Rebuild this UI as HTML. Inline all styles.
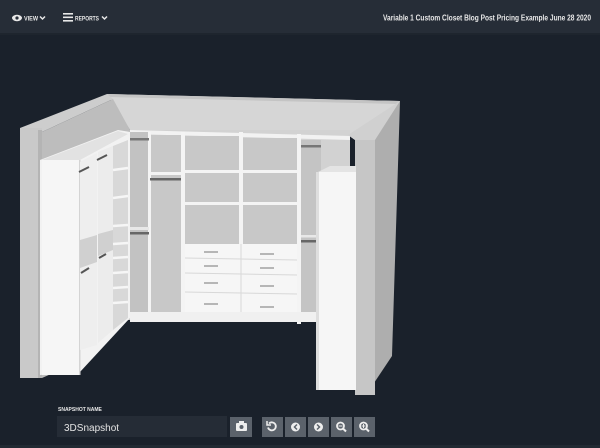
<!DOCTYPE html>
<html><head><meta charset="utf-8"><style>
html,body{margin:0;padding:0;background:#1a212b;width:600px;height:448px;overflow:hidden}
svg{display:block}
text{font-family:"Liberation Sans",sans-serif}
</style></head><body>
<svg width="600" height="448" viewBox="0 0 600 448" xmlns="http://www.w3.org/2000/svg">
<rect width="600" height="448" fill="#1a212b"/>
<rect x="0" y="0" width="600" height="34" fill="#262d37"/>
<rect x="0" y="33" width="600" height="2" fill="#1e252e"/>
<!-- header -->
<ellipse cx="17" cy="18" rx="5" ry="3.2" fill="#e8e8e8"/><circle cx="17" cy="18" r="1.6" fill="#262d37"/>
<text x="24" y="20.5" font-size="6" font-weight="bold" fill="#e8e8e8" textLength="14" lengthAdjust="spacingAndGlyphs">VIEW</text>
<path d="M40 16.5l2.5 2.5 2.5-2.5" stroke="#e8e8e8" stroke-width="1.5" fill="none"/>
<rect x="63" y="13" width="10" height="1.6" fill="#e8e8e8"/><rect x="63" y="16.5" width="10" height="1.6" fill="#e8e8e8"/><rect x="63" y="20" width="10" height="1.6" fill="#e8e8e8"/>
<text x="75" y="20.5" font-size="6" font-weight="bold" fill="#e8e8e8" textLength="24" lengthAdjust="spacingAndGlyphs">REPORTS</text>
<path d="M102 16.5l2.5 2.5 2.5-2.5" stroke="#e8e8e8" stroke-width="1.5" fill="none"/>
<text x="383" y="20.5" font-size="8" font-weight="bold" fill="#e8e8e8" textLength="208" lengthAdjust="spacingAndGlyphs">Variable 1 Custom Closet Blog Post Pricing Example June 28 2020</text>

<!-- back wall -->
<polygon points="107,94 400,101 375,140 355,140 348,135 130,130" fill="#d6d6d6"/>
<polygon points="107,94 400,101 398,104 110,97" fill="#c4c4c4"/>
<polygon points="20,128 107,94 113,99 42,132" fill="#cdcdcd"/>
<polygon points="42,132 113,99 130,130 130,300 60,370 42,378" fill="#bdbdbd"/>
<rect x="20" y="128" width="22" height="250" fill="#c9c9c9"/>
<rect x="38" y="130" width="4" height="248" fill="#b4b4b4"/>
<rect x="130" y="130" width="220" height="190" fill="#d2d2d2"/>
<polygon points="130,130 350,136 350,140 130,134" fill="#f2f2f2"/>
<rect x="128" y="132" width="21" height="188" fill="#c2c2c2"/>
<rect x="148" y="132" width="3" height="188" fill="#f4f4f4"/>
<rect x="181" y="132" width="4" height="188" fill="#f4f4f4"/>
<rect x="239" y="132" width="4" height="190" fill="#f4f4f4"/>
<rect x="297" y="134" width="4" height="190" fill="#f4f4f4"/>
<rect x="151" y="135" width="30" height="185" fill="#c8c8c8"/>
<rect x="185" y="136" width="54" height="110" fill="#c8c8c8"/>
<rect x="243" y="138" width="54" height="110" fill="#c8c8c8"/>
<rect x="151" y="172" width="30" height="3" fill="#f4f4f4"/>
<rect x="150" y="178" width="31" height="2.5" fill="#666"/>
<rect x="185" y="170" width="112" height="3" fill="#f4f4f4"/>
<rect x="185" y="202" width="112" height="3" fill="#f4f4f4"/>
<rect x="128" y="227" width="21" height="3" fill="#e8e8e8"/>
<rect x="128" y="232" width="21" height="2.5" fill="#666"/>
<rect x="128" y="138" width="21" height="2.5" fill="#777"/>
<rect x="185" y="244" width="112" height="78" fill="#f6f6f6"/>
<g stroke="#d8d8d8" stroke-width="1" fill="none">
<line x1="185" y1="258" x2="297" y2="260"/><line x1="185" y1="273" x2="297" y2="275"/><line x1="185" y1="292" x2="297" y2="294"/><line x1="241" y1="244" x2="241" y2="322"/>
</g>
<g stroke="#777" stroke-width="1">
<line x1="204" y1="252" x2="218" y2="252"/><line x1="260" y1="254" x2="274" y2="254"/>
<line x1="204" y1="266" x2="218" y2="266"/><line x1="260" y1="268" x2="274" y2="268"/>
<line x1="204" y1="283" x2="218" y2="283"/><line x1="260" y1="286" x2="274" y2="286"/>
<line x1="204" y1="304" x2="218" y2="304"/><line x1="260" y1="307" x2="274" y2="307"/>
</g>
<rect x="301" y="140" width="20" height="180" fill="#c4c4c4"/>
<rect x="301" y="145" width="20" height="2.5" fill="#777"/>
<rect x="301" y="235" width="18" height="2.5" fill="#e8e8e8"/>
<rect x="301" y="240" width="18" height="2.5" fill="#666"/>
<rect x="130" y="312" width="195" height="10" fill="#f0f0f0"/>
<polygon points="40,160 118,130 130,132 130,318 80,372 40,375" fill="#f2f2f2"/>
<polygon points="42,160 118,131 128,134 80,160" fill="#e2e2e2"/>
<rect x="42" y="160" width="38" height="215" fill="#f6f6f6"/>
<rect x="79" y="160" width="1.5" height="215" fill="#d4d4d4"/>
<polygon points="80,162 97,153 97,345 80,350" fill="#eeeeee"/>
<polygon points="98,152 113,146 113,330 98,343" fill="#ececec"/>
<polygon points="80,240 97,235 97,262 80,268" fill="#d0d0d0"/>
<polygon points="98,234 113,230 113,250 98,256" fill="#d0d0d0"/>
<line x1="79" y1="172" x2="89" y2="167" stroke="#555" stroke-width="2"/>
<line x1="97" y1="160" x2="107" y2="155" stroke="#555" stroke-width="2"/>
<line x1="81" y1="273" x2="89" y2="268" stroke="#555" stroke-width="2"/>
<line x1="99" y1="258" x2="106" y2="254" stroke="#555" stroke-width="2"/>
<polygon points="113,146 128,140 128,318 113,330" fill="#d8d8d8"/>
<g stroke="#f6f6f6" stroke-width="2.5">
<line x1="113" y1="170" x2="128" y2="168"/><line x1="113" y1="198" x2="128" y2="196"/><line x1="113" y1="226" x2="128" y2="225"/><line x1="113" y1="244" x2="128" y2="243"/><line x1="113" y1="258" x2="128" y2="257"/><line x1="113" y1="273" x2="128" y2="272"/><line x1="113" y1="288" x2="128" y2="287"/><line x1="113" y1="303" x2="128" y2="302"/>
</g>
<polygon points="355,140 400,101 392,356 366,395 355,395" fill="#aeaeae"/>
<polygon points="355,140 375,140 375,395 355,395" fill="#c6c6c6"/>
<polygon points="348,135 400,101 375,140 355,140" fill="#d0d0d0"/>
<polygon points="318,172 330,166 356,166 356,172" fill="#e4e4e4"/>
<rect x="318" y="172" width="38" height="218" fill="#f6f6f6"/>
<rect x="316" y="172" width="3" height="218" fill="#dedede"/>

<text x="58" y="411" font-size="5" font-weight="bold" fill="#e8e8e8">SNAPSHOT NAME</text>
<rect x="57" y="416" width="170" height="21" fill="#252c36"/>
<text x="64" y="431" font-size="10" fill="#e4e4e4">3DSnapshot</text>
<g fill="#5b626b">
<rect x="230" y="417" width="22" height="20"/>
<rect x="262" y="417" width="21" height="20"/><rect x="285" y="417" width="21" height="20"/><rect x="308" y="417" width="21" height="20"/><rect x="331" y="417" width="21" height="20"/><rect x="354" y="417" width="21" height="20"/>
</g>
<rect x="236" y="423" width="11" height="8" rx="1" fill="#eee"/><rect x="239" y="421" width="5" height="2" fill="#eee"/><circle cx="241.5" cy="427" r="2" fill="#5b626b"/>
<path d="M269 423.5a4 4 0 1 1 -1 4" stroke="#eee" stroke-width="1.8" fill="none"/><path d="M267 421v4h4" stroke="#eee" stroke-width="1.5" fill="none"/>
<circle cx="295.5" cy="427" r="4.5" fill="#eee"/><path d="M297 424.5l-2.5 2.5 2.5 2.5" stroke="#5b626b" stroke-width="1.5" fill="none"/>
<circle cx="318.5" cy="427" r="4.5" fill="#eee"/><path d="M317 424.5l2.5 2.5 -2.5 2.5" stroke="#5b626b" stroke-width="1.5" fill="none"/>
<circle cx="340.5" cy="426" r="3.5" stroke="#eee" stroke-width="1.8" fill="none"/><line x1="343" y1="428.5" x2="346" y2="431.5" stroke="#eee" stroke-width="2"/><line x1="338.5" y1="426" x2="342.5" y2="426" stroke="#eee" stroke-width="1"/>
<circle cx="363.5" cy="426" r="3.5" stroke="#eee" stroke-width="1.8" fill="none"/><line x1="366" y1="428.5" x2="369" y2="431.5" stroke="#eee" stroke-width="2"/><line x1="361.5" y1="426" x2="365.5" y2="426" stroke="#eee" stroke-width="1"/><line x1="363.5" y1="424" x2="363.5" y2="428" stroke="#eee" stroke-width="1"/>
<rect x="0" y="445" width="600" height="3" fill="#222a33"/>
</svg>
</body></html>
